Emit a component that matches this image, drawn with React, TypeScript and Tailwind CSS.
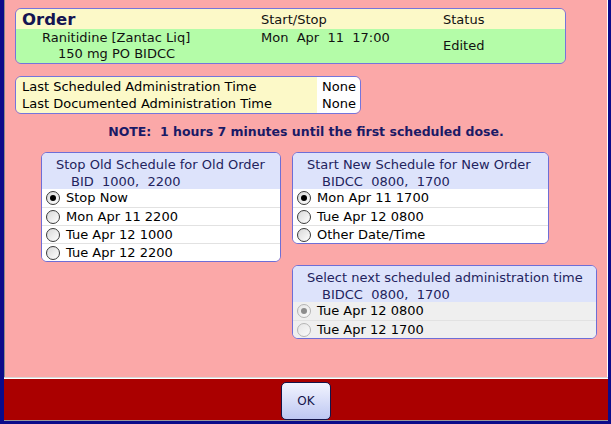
import React from "react";

const font = { fontFamily: '"DejaVu Sans", Verdana, sans-serif' };

function Radio({ checked, disabled }: { checked?: boolean; disabled?: boolean }) {
  return (
    <span
      className={`flex h-[14px] w-[14px] shrink-0 items-center justify-center rounded-full border bg-gradient-to-br ${
        disabled ? "border-[#b4b4b4] from-[#e6e6e6] to-[#fafafa]" : "border-[#3a3a3a] from-[#d8d8d8] to-white"
      }`}
    >
      {checked && <span className={`h-[6px] w-[6px] rounded-full ${disabled ? "bg-[#8c8c8c]" : "bg-black"}`} />}
    </span>
  );
}

function ScheduleBox({
  title,
  freq,
  options,
  selected,
  disabled,
  width,
}: {
  title: string;
  freq: string;
  options: string[];
  selected: number;
  disabled?: boolean;
  width: string;
}) {
  return (
    <div className={`${width} overflow-hidden rounded-[6px] border border-[#6e6ed6] bg-white`}>
      <div className="h-[36px] bg-[#dde3fb] pt-[3px] text-[13px] leading-[17px] text-[#23235e]">
        <div className="pl-[14px] whitespace-nowrap">{title}</div>
        <div className="pl-[29px] whitespace-pre">{freq}</div>
      </div>
      {options.map((o, i) => (
        <div
          key={o}
          className={`flex h-[18px] items-center gap-[6px] pl-[4px] text-[13px] text-black ${
            i > 0 ? "border-t border-[#e2e2e2]" : ""
          } ${disabled ? "bg-[#efefef]" : "bg-white"}`}
        >
          <Radio checked={i === selected} disabled={disabled} />
          <span>{o}</span>
        </div>
      ))}
    </div>
  );
}

export default function App() {
  return (
    <div className="flex h-[424px] w-[611px] flex-col bg-[#0b0b8a] pb-[3px] pl-[4px] pr-[3px]" style={font}>
      {/* Main pink panel */}
      <div className="h-[377px] border-l border-r border-l-[#8a8a8a] border-r-white bg-[#fba8a8] pl-[10px] pt-[8px]">
        {/* Order box */}
        <div className="w-[551px] overflow-hidden rounded-[6px] border border-[#7474dc]">
          <div className="grid h-[20px] grid-cols-[239px_182px_1fr] items-end bg-[#fcf9c8] pl-[6px] text-[13px] leading-[16px] text-[#111]">
            <span className="text-[16.5px] font-bold leading-[19px] text-[#151552]">Order</span>
            <span className="pb-[1px]">Start/Stop</span>
            <span className="pb-[1px]">Status</span>
          </div>
          <div className="grid h-[34px] grid-cols-[239px_182px_1fr] bg-[#b4fca8] pl-[6px] pt-[1px] text-[13px] leading-[16px] text-[#111]">
            <div>
              <div className="pl-[20px]">Ranitidine [Zantac Liq]</div>
              <div className="pl-[36px]">150 mg PO BIDCC</div>
            </div>
            <div className="whitespace-pre">Mon  Apr  11  17:00</div>
            <div className="self-center pb-[1px]">Edited</div>
          </div>
        </div>

        {/* Last administration times */}
        <div className="mt-[12px] flex w-[346px] overflow-hidden rounded-[6px] border border-[#7474dc] text-[13px] leading-[17px] text-black">
          <div className="w-[301px] whitespace-nowrap bg-[#fcf9c8] py-[1px] pl-[6px]">
            <div>Last Scheduled Administration Time</div>
            <div>Last Documented Administration Time</div>
          </div>
          <div className="flex-1 bg-white py-[1px] pl-[5px]">
            <div>None</div>
            <div>None</div>
          </div>
        </div>

        <div className="mt-[10px] pr-[10px] text-center text-[12.5px] font-bold leading-[16px] text-[#1a1a66] whitespace-pre">
          NOTE:  1 hours 7 minutes until the first scheduled dose.
        </div>

        {/* Schedules */}
        <div className="mt-[12px] flex items-start gap-[11px] pl-[26px]">
          <ScheduleBox
            width="w-[240px]"
            title="Stop Old Schedule for Old Order"
            freq="BID  1000,  2200"
            options={["Stop Now", "Mon Apr 11 2200", "Tue Apr 12 1000", "Tue Apr 12 2200"]}
            selected={0}
          />
          <div className="flex flex-col gap-[21px]">
            <ScheduleBox
              width="w-[257px]"
              title="Start New Schedule for New Order"
              freq="BIDCC  0800,  1700"
              options={["Mon Apr 11 1700", "Tue Apr 12 0800", "Other Date/Time"]}
              selected={0}
            />
            <ScheduleBox
              width="w-[305px]"
              title="Select next scheduled administration time"
              freq="BIDCC  0800,  1700"
              options={["Tue Apr 12 0800", "Tue Apr 12 1700"]}
              selected={0}
              disabled
            />
          </div>
        </div>
      </div>

      {/* Footer bar */}
      <div className="h-[2px] border-t border-[#d8d8d8] bg-white" />
      <div className="flex h-[42px] border-b border-[#9a9a9a] bg-[#aa0000] pl-[277px] pt-[3px]">
        <button className="h-[38px] w-[50px] rounded-[5px] border border-[#14144a] bg-gradient-to-b from-[#f2f4fe] to-[#bec7f2] text-[12px] text-[#14144a]">
          OK
        </button>
      </div>
    </div>
  );
}
